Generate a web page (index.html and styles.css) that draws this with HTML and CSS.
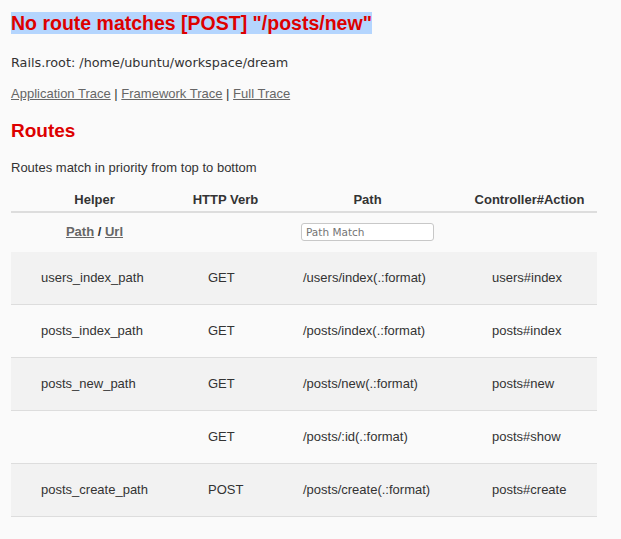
FILE: index.html
```html
<!DOCTYPE html>
<html lang="en">
<head>
  <meta charset="UTF-8">
  <title>Action Controller: Exception caught</title>
  <link rel="stylesheet" href="styles.css">
</head>
<body>

<header>
  <h1><span class="selected">No route matches [POST] "/posts/new"</span></h1>
</header>

<div id="container">
  <p class="root"><code>Rails.root: /home/ubuntu/workspace/dream</code></p>

  <p class="traces">
    <a href="#">Application Trace</a> |
    <a href="#">Framework Trace</a> |
    <a href="#">Full Trace</a>
  </p>

  <h2>Routes</h2>
  <p class="hint">Routes match in priority from top to bottom</p>

  <table id="route_table" class="route_table">
    <colgroup>
      <col class="col-helper">
      <col class="col-verb">
      <col class="col-path">
      <col class="col-action">
    </colgroup>
    <thead>
      <tr>
        <th>Helper</th>
        <th>HTTP Verb</th>
        <th>Path</th>
        <th>Controller#Action</th>
      </tr>
      <tr class="bottom">
        <th><a href="#">Path</a> / <a href="#">Url</a></th>
        <th></th>
        <th><input type="search" id="path_search" placeholder="Path Match"></th>
        <th></th>
      </tr>
    </thead>
    <tbody>
      <tr>
        <td>users_index_path</td>
        <td>GET</td>
        <td>/users/index(.:format)</td>
        <td>users#index</td>
      </tr>
      <tr>
        <td>posts_index_path</td>
        <td>GET</td>
        <td>/posts/index(.:format)</td>
        <td>posts#index</td>
      </tr>
      <tr>
        <td>posts_new_path</td>
        <td>GET</td>
        <td>/posts/new(.:format)</td>
        <td>posts#new</td>
      </tr>
      <tr>
        <td></td>
        <td>GET</td>
        <td>/posts/:id(.:format)</td>
        <td>posts#show</td>
      </tr>
      <tr>
        <td>posts_create_path</td>
        <td>POST</td>
        <td>/posts/create(.:format)</td>
        <td>posts#create</td>
      </tr>
    </tbody>
  </table>
</div>

</body>
</html>
```

FILE: styles.css
```css
* { box-sizing: border-box; }

body {
  margin: 0;
  padding: 13px 11px 0;
  background: #fafafa;
  color: #333;
}

body, p, td, th, input {
  font-family: "Liberation Sans", Helvetica, Arial, sans-serif;
  font-size: 13px;
  line-height: 18px;
}

code {
  font-family: "DejaVu Sans", "Lucida Grande", sans-serif;
  font-size: 12.8px;
}

a { color: #666; }

h1, h2 {
  margin: 0;
  color: #d00;
  font-size: 19px;
  line-height: 21px;
}

h1 {
  font-size: 19.5px;
}

h1 .selected {
  background: #b4d5fe;
}

h2 {
  margin-top: 17px;
}

p { margin: 0; }

.root { margin-top: 20px; }
.traces { margin-top: 13px; }
.hint { margin-top: 18px; }

/* Routes table */
.route_table {
  margin-top: 12px;
  width: 586px;
  border-collapse: collapse;
  table-layout: fixed;
}

.col-helper { width: 167px; }
.col-verb { width: 95px; }
.col-path { width: 189px; }
.col-action { width: 135px; }

.route_table thead tr {
  border-bottom: 2px solid #ddd;
}

.route_table thead tr.bottom {
  border-bottom: none;
}

.route_table th {
  padding: 2px 0;
  font-weight: bold;
  text-align: center;
}

.route_table tr.bottom th {
  padding: 10px 0 11px;
}

#path_search {
  display: block;
  width: 133px;
  height: 18px;
  margin: 0 auto;
  padding: 0 4px;
  font-family: "DejaVu Sans", sans-serif;
  font-size: 10.5px;
  font-weight: normal;
  border: 1px solid #c8c8c8;
  border-radius: 3px;
  background: #fff;
  outline: none;
}

#path_search::placeholder { color: #757575; }

.route_table tbody tr {
  border-bottom: 1px solid #ddd;
}

.route_table tbody tr:nth-child(odd) {
  background: #f2f2f2;
}

.route_table td {
  height: 52px;
  padding: 17px 30px;
  white-space: nowrap;
}
```
